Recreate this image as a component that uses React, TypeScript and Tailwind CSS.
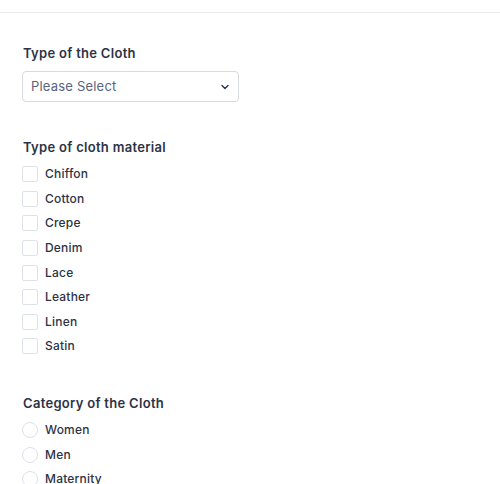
import React from 'react';

const materials = ['Chiffon', 'Cotton', 'Crepe', 'Denim', 'Lace', 'Leather', 'Linen', 'Satin'];
const categories = ['Women', 'Men', 'Maternity'];

const font = { fontFamily: 'Inter, "Noto Sans", sans-serif' };

const App: React.FC = () => {
  return (
    <div className="w-[500px] h-[484px] overflow-hidden bg-white text-[#2c3345]" style={font}>
      <div className="h-[13px] border-b border-[#e9e9ec]" />

      <div className="px-[22px]">
        <div className="mt-[30px]">
          <label className="block pl-[1px] text-[13px] leading-[20px] font-semibold tracking-[0.3px] mb-[8px]">
            Type of the Cloth
          </label>
          <div className="flex items-center justify-between w-[217px] h-[31px] border border-[#d8dae3] rounded-[4px] pl-[8px] pr-[8px]">
            <span className="text-[13px] tracking-[0.2px] text-[#57647e]">Please Select</span>
            <svg width="10" height="10" viewBox="0 0 10 10" fill="none">
              <path d="M2 3.5L5 6.5L8 3.5" stroke="#2c3345" strokeWidth="1.4" strokeLinecap="round" strokeLinejoin="round" />
            </svg>
          </div>
        </div>

        <div className="mt-[35px]">
          <label className="block pl-[1px] text-[13px] leading-[20px] font-semibold tracking-[0.3px] mb-[5px]">
            Type of cloth material
          </label>
          <div className="flex flex-col">
            {materials.map(m => (
              <div key={m} className="flex items-center h-[24.6px]">
                <span className="w-[16px] h-[16px] border border-[#dfe1e8] rounded-[2px] bg-white" />
                <span className="ml-[7px] text-[12px] font-medium tracking-[0.2px]">{m}</span>
              </div>
            ))}
          </div>
        </div>

        <div className="mt-[34px]">
          <label className="block pl-[1px] text-[13px] leading-[20px] font-semibold tracking-[0.3px] mb-[5px]">
            Category of the Cloth
          </label>
          <div className="flex flex-col">
            {categories.map(c => (
              <div key={c} className="flex items-center h-[24.6px]">
                <span className="w-[16px] h-[16px] border border-[#dfe1e8] rounded-full bg-white" />
                <span className="ml-[7px] text-[12px] font-medium tracking-[0.2px]">{c}</span>
              </div>
            ))}
          </div>
        </div>
      </div>
    </div>
  );
};

export default App;
